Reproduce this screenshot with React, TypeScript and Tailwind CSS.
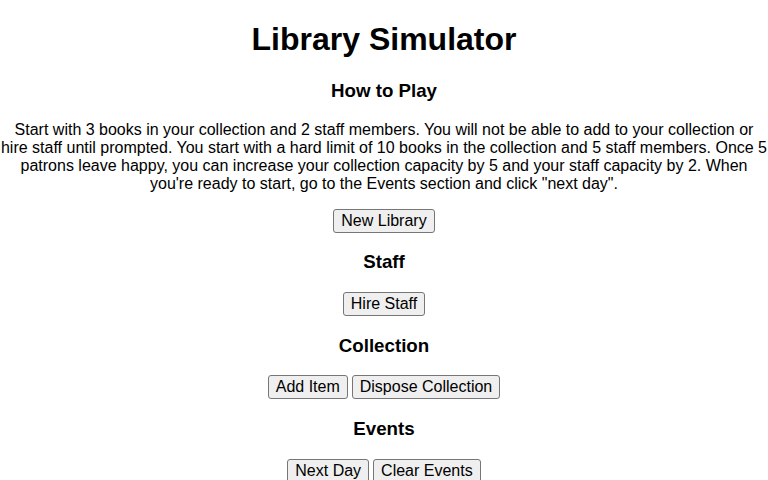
const btn =
  "rounded-[3px] border border-[#767676] bg-[#efefef] px-[7px] py-[2px] text-[16px] leading-[normal] text-black hover:bg-[#e5e5e5]";

function Section({ title, children }: { title: string; children: React.ReactNode }) {
  return (
    <>
      <h3 className="my-[18.72px] text-[18.72px] font-bold leading-[normal]">{title}</h3>
      <div className="flex justify-center gap-[4px]">{children}</div>
    </>
  );
}

export default function App() {
  return (
    <div className="text-center font-['Liberation_Sans',Arial,sans-serif] text-[16px] leading-[normal] text-black">
      <h1 className="my-[21.44px] inline-block w-full text-[32px] font-bold leading-[normal]">
        Library Simulator
      </h1>
      <h3 className="mb-[18.72px] text-[18.72px] font-bold leading-[normal]">How to Play</h3>
      <p className="my-[16px]">
        Start with 3 books in your collection and 2 staff members. You will not be able to add to
        your collection or hire staff until prompted. You start with a hard limit of 10 books in
        the collection and 5 staff members. Once 5 patrons leave happy, you can increase your
        collection capacity by 5 and your staff capacity by 2. When you're ready to start, go to
        the Events section and click "next day".
      </p>
      <div className="flex justify-center">
        <button type="button" className={btn}>
          New Library
        </button>
      </div>
      <Section title="Staff">
        <button type="button" className={btn}>
          Hire Staff
        </button>
      </Section>
      <Section title="Collection">
        <button type="button" className={btn}>
          Add Item
        </button>
        <button type="button" className={btn}>
          Dispose Collection
        </button>
      </Section>
      <Section title="Events">
        <button type="button" className={btn}>
          Next Day
        </button>
        <button type="button" className={btn}>
          Clear Events
        </button>
      </Section>
    </div>
  );
}
